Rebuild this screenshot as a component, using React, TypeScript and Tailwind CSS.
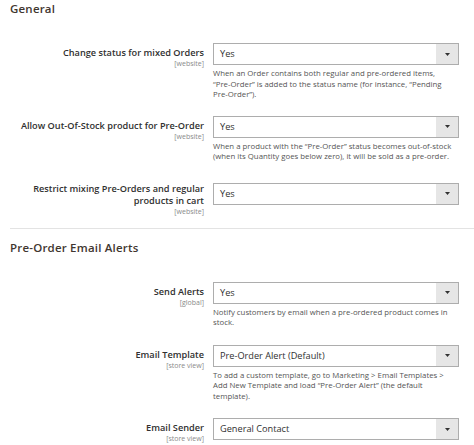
const FONT = "font-['Open_Sans',sans-serif]";

type Field = {
  label: string[];
  scope: string;
  value: string;
  help?: string[];
  mt: string;
};

const GENERAL: Field[] = [
  {
    label: ["Change status for mixed Orders"],
    scope: "[website]",
    value: "Yes",
    help: [
      "When an Order contains both regular and pre-ordered items,",
      "“Pre-Order” is added to the status name (for instance, “Pending",
      "Pre-Order”).",
    ],
    mt: "mt-[27px]",
  },
  {
    label: ["Allow Out-Of-Stock product for Pre-Order"],
    scope: "[website]",
    value: "Yes",
    help: [
      "When a product with the “Pre-Order” status becomes out-of-stock",
      "(when its Quantity goes below zero), it will be sold as a pre-order.",
    ],
    mt: "mt-[16px]",
  },
  {
    label: ["Restrict mixing Pre-Orders and regular", "products in cart"],
    scope: "[website]",
    value: "Yes",
    mt: "mt-[21px]",
  },
];

const ALERTS: Field[] = [
  {
    label: ["Send Alerts"],
    scope: "[global]",
    value: "Yes",
    help: ["Notify customers by email when a pre-ordered product comes in", "stock."],
    mt: "mt-[27px]",
  },
  {
    label: ["Email Template"],
    scope: "[store view]",
    value: "Pre-Order Alert (Default)",
    help: [
      "To add a custom template, go to Marketing > Email Templates >",
      "Add New Template and load “Pre-Order Alert” (the default",
      "template).",
    ],
    mt: "mt-[17px]",
  },
  {
    label: ["Email Sender"],
    scope: "[store view]",
    value: "General Contact",
    mt: "mt-[17px]",
  },
];

function Row({ f }: { f: Field }) {
  const multi = f.label.length > 1;
  return (
    <div className={`flex ${f.mt}`}>
      <div className={`w-[204px] shrink-0 text-right ${multi ? "pt-0" : "pt-[4px]"}`}>
        {f.label.map((l) => (
          <div key={l} className="text-[9.2px] font-semibold leading-[12px] text-[#303030]">
            {l}
          </div>
        ))}
        <div className={`text-[7px] text-[#8a8a8a] ${multi ? "leading-[10px]" : "leading-[9px]"}`}>{f.scope}</div>
      </div>
      <div className="ml-[9px] w-[246px] shrink-0">
        <div className="flex h-[22px] items-stretch border border-[#adadad] bg-white">
          <div className="flex flex-1 items-center pl-[6px] text-[9.2px] text-[#303030]">{f.value}</div>
          <div className="flex w-[22px] items-center justify-center bg-[#e6e6e6]">
            <svg width="5" height="3" viewBox="0 0 5 3">
              <path d="M0 0h5L2.5 3z" fill="#333" />
            </svg>
          </div>
        </div>
        {f.help && (
          <div className="mt-[3px] text-[7.8px] leading-[10.5px] text-[#555]">
            {f.help.map((h) => (
              <div key={h} className="whitespace-nowrap">
                {h}
              </div>
            ))}
          </div>
        )}
      </div>
    </div>
  );
}

export default function App() {
  return (
    <div className={`h-[445px] w-[474px] overflow-hidden bg-white ${FONT}`}>
      <h2 className="pl-[10px] pt-[2px] text-[11.5px] font-semibold leading-[14px] tracking-[0.2px] text-[#41362f]">
        General
      </h2>
      {GENERAL.map((f) => (
        <Row key={f.value + f.label[0]} f={f} />
      ))}
      <div className="ml-[10px] mt-[11px] h-px bg-[#e3e3e3]" />
      <h2 className="mt-[12px] pl-[10px] text-[11.5px] font-semibold leading-[14px] tracking-[0.2px] text-[#41362f]">
        Pre-Order Email Alerts
      </h2>
      {ALERTS.map((f) => (
        <Row key={f.label[0]} f={f} />
      ))}
    </div>
  );
}
